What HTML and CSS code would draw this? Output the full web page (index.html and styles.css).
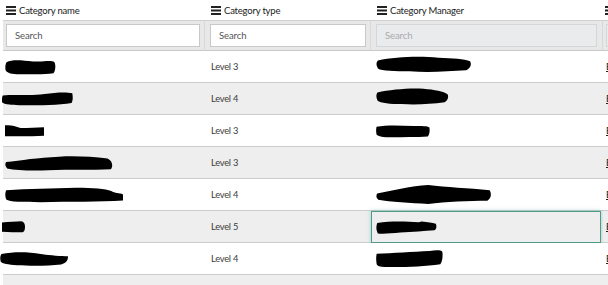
FILE: index.html
```html
<!DOCTYPE html>
<html>
<head>
<meta charset="utf-8">
<link rel="stylesheet" href="styles.css">
</head>
<body>
<div class="grid">
  <div class="hcell c1"><svg class="menu" width="10" height="9" viewBox="0 0 10 9"><rect x="0" y="0" width="10" height="2"/><rect x="0" y="3.5" width="10" height="2"/><rect x="0" y="7" width="10" height="2"/></svg>Category name</div>
  <div class="hcell c2"><svg class="menu" width="10" height="9" viewBox="0 0 10 9"><rect x="0" y="0" width="10" height="2"/><rect x="0" y="3.5" width="10" height="2"/><rect x="0" y="7" width="10" height="2"/></svg>Category type</div>
  <div class="hcell c3"><svg class="menu" width="10" height="9" viewBox="0 0 10 9"><rect x="0" y="0" width="10" height="2"/><rect x="0" y="3.5" width="10" height="2"/><rect x="0" y="7" width="10" height="2"/></svg>Category Manager</div>
  <div class="hcell c4"><svg class="menu" width="10" height="9" viewBox="0 0 10 9"><rect x="0" y="0" width="10" height="2"/><rect x="0" y="3.5" width="10" height="2"/><rect x="0" y="7" width="10" height="2"/></svg>Actions</div>

  <div class="fcell c1"><input class="search" placeholder="Search"></div>
  <div class="fcell c2"><input class="search" placeholder="Search"></div>
  <div class="fcell c3"><input class="search" placeholder="Search" disabled></div>
  <div class="fcell c4"><input class="search" placeholder="Search" disabled></div>

  <!-- row 1 -->
  <div class="cell c1 odd"><svg class="blob" width="51" height="17" viewBox="0 0 100 20" preserveAspectRatio="none"><path d="M3,5 C15,1 35,3 55,4 C75,5 90,2 97,5 C100,9 99,15 95,18 C75,20 50,19 28,19 C14,19 4,18 1,14 C0,10 1,7 3,5 Z"/></svg></div>
  <div class="cell c2 odd">Level 3</div>
  <div class="cell c3 odd"><svg class="blob up" width="96" height="18" viewBox="0 0 100 20" preserveAspectRatio="none"><path d="M2,6 C20,2 45,1 65,3 C80,4 92,4 98,7 C100,11 98,15 94,17 C75,18 55,20 35,18 C20,18 6,18 2,15 C0,11 0,8 2,6 Z"/></svg></div>
  <div class="cell c4 odd"><a href="#">Edit</a></div>

  <!-- row 2 -->
  <div class="cell c1 even"><svg class="blob shiftl" width="71" height="15" viewBox="0 0 100 20" preserveAspectRatio="none"><path d="M1,6 C20,4 40,7 60,4 C75,2 90,1 99,3 C100,8 100,13 98,16 C80,19 55,19 30,19 C15,19 3,18 0,15 C0,11 0,8 1,6 Z"/></svg></div>
  <div class="cell c2 even">Level 4</div>
  <div class="cell c3 even"><svg class="blob up" width="73" height="18" viewBox="0 0 100 20" preserveAspectRatio="none"><path d="M2,6 C20,3 45,1 65,2 C80,3 93,5 98,8 C100,11 98,15 94,17 C75,19 55,20 35,19 C20,19 6,18 2,15 C0,11 0,8 2,6 Z"/></svg></div>
  <div class="cell c4 even"><a href="#">Edit</a></div>

  <!-- row 3 -->
  <div class="cell c1 odd"><svg class="blob" width="39" height="13" viewBox="0 0 100 20" preserveAspectRatio="none"><path d="M0,2 C15,1 25,3 40,6 C60,6 80,6 100,5 L100,18 C80,19 60,19 40,19 C25,19 10,19 0,19 Z"/></svg></div>
  <div class="cell c2 odd">Level 3</div>
  <div class="cell c3 odd"><svg class="blob" width="54" height="14" viewBox="0 0 100 20" preserveAspectRatio="none"><path d="M1,4 C20,1 45,2 70,3 C85,3 95,3 99,5 C100,10 99,15 96,18 C75,19 50,19 28,19 C14,19 4,18 1,15 C0,11 0,7 1,4 Z"/></svg></div>
  <div class="cell c4 odd"><a href="#">Edit</a></div>

  <!-- row 4 -->
  <div class="cell c1 even"><svg class="blob" width="108" height="18" viewBox="0 0 100 20" preserveAspectRatio="none"><path d="M1,9 C15,7 30,4 50,3 C65,2 80,3 95,5 C100,8 100,14 98,17 C80,18 60,17 40,18 C25,19 10,18 2,16 C0,13 0,11 1,9 Z"/></svg></div>
  <div class="cell c2 even">Level 3</div>
  <div class="cell c3 even"></div>
  <div class="cell c4 even"><a href="#">Edit</a></div>

  <!-- row 5 -->
  <div class="cell c1 odd"><svg class="blob" width="118" height="17" viewBox="0 0 100 20" preserveAspectRatio="none"><path d="M1,5 C20,3 40,3 60,2 C75,2 85,3 90,6 C93,9 97,8 100,10 L100,17 C80,19 55,18 30,19 C15,19 4,19 1,16 C0,12 0,8 1,5 Z"/></svg></div>
  <div class="cell c2 odd">Level 4</div>
  <div class="cell c3 odd"><svg class="blob" width="116" height="21" viewBox="0 0 100 20" preserveAspectRatio="none"><path d="M1,9 C15,6 30,2 45,1 C60,3 80,4 98,6 C100,10 99,14 96,16 C80,16 60,17 45,19 C30,18 12,17 2,15 C0,13 0,11 1,9 Z"/></svg></div>
  <div class="cell c4 odd"><a href="#">Edit</a></div>

  <!-- row 6 -->
  <div class="cell c1 even"><svg class="blob shiftl" width="23" height="13" viewBox="0 0 100 20" preserveAspectRatio="none"><path d="M0,4 C30,2 60,3 85,2 C95,3 100,6 100,10 C100,15 97,18 90,19 C60,19 30,19 0,18 Z"/></svg></div>
  <div class="cell c2 even">Level 5</div>
  <div class="cell c3 even"><div class="selected"><svg class="blob" width="61" height="16" viewBox="0 0 100 20" preserveAspectRatio="none"><path d="M2,5 C25,2 50,3 70,4 L75,3 C85,4 92,4 98,6 C100,9 99,13 96,14 C80,15 60,16 40,17 C25,18 10,19 3,18 C0,14 0,9 2,5 Z"/></svg></div></div>
  <div class="cell c4 even"><a href="#">Edit</a></div>

  <!-- row 7 -->
  <div class="cell c1 odd"><svg class="blob shiftl2" width="68" height="15" viewBox="0 0 100 20" preserveAspectRatio="none"><path d="M2,4 C20,1 40,1 60,4 C75,6 90,7 100,7 C100,12 98,16 90,18 C70,20 45,20 25,19 C12,18 3,17 1,14 C0,10 0,7 2,4 Z"/></svg></div>
  <div class="cell c2 odd">Level 4</div>
  <div class="cell c3 odd"><svg class="blob" width="67" height="19" viewBox="0 0 100 20" preserveAspectRatio="none"><path d="M1,5 C25,4 55,3 80,2 C90,1 97,1 99,3 C100,8 99,13 96,16 C75,18 50,19 25,19 C12,19 3,19 1,16 C0,12 0,8 1,5 Z"/></svg></div>
  <div class="cell c4 odd"><a href="#">Edit</a></div>

  <!-- row 8 -->
  <div class="cell c1 even"></div>
  <div class="cell c2 even"></div>
  <div class="cell c3 even"></div>
  <div class="cell c4 even"></div>
</div>
</body>
</html>
```

FILE: styles.css
```css
html, body {
  margin: 0;
  padding: 0;
  background: #fff;
  overflow: hidden;
}
body {
  font-family: Lato, "Open Sans", sans-serif;
  color: #333;
  font-size: 9px;
}
.grid {
  display: grid;
  grid-template-columns: 202px 166px 232px 60px;
  margin-left: 3px;
}
.hcell {
  height: 20px;
  display: flex;
  align-items: center;
  font-size: 9.5px;
  letter-spacing: -0.2px;
  color: #222;
  white-space: nowrap;
  overflow: hidden;
  padding-left: 3px;
}
.hcell.c2, .hcell.c3 { padding-left: 6px; }
.hcell.c4 { padding-left: 2px; }
.menu {
  fill: #222;
  margin-right: 3px;
  flex: none;
}
.fcell {
  height: 29px;
  background: #e8e8e8;
  border-top: 1px solid #d0d0d0;
  border-bottom: 1px solid #c8c8c8;
  border-right: 1px solid #d8d8d8;
  display: flex;
  align-items: center;
  padding: 0 4px 0 3px;
  box-sizing: content-box;
}
.fcell.c2 { padding: 0 4px 0 5px; }
.fcell.c3 { padding: 0 5px 0 5px; }
.search {
  width: 100%;
  box-sizing: border-box;
  height: 23px;
  border: 1px solid #c9c9c9;
  background: #fff;
  font-family: Lato, "Open Sans", sans-serif;
  font-size: 9.5px;
  letter-spacing: -0.1px;
  padding: 0 0 0 8px;
  color: #333;
  outline: none;
  margin: 0;
}
.search::placeholder { color: #555; }
.search:disabled {
  background: #e9ebec;
  border-color: #d4d6d8;
}
.search:disabled::placeholder { color: #a8aaac; }
.cell {
  height: 31px;
  border-bottom: 1px solid #cccccc;
  display: flex;
  align-items: center;
  white-space: nowrap;
  color: #3a3a3a;
  font-size: 9.3px;
  letter-spacing: -0.25px;
  overflow: visible;
}
.cell.odd { background: #fff; }
.cell.even { background: #eeeeee; }
.cell.c1 { padding-left: 2px; }
.cell.c2 { padding-left: 6px; }
.cell.c3 { padding-left: 5px; }
.cell.c4 { padding-left: 3px; overflow: hidden; }
.cell a { color: #222; text-decoration: underline; }
.blob { fill: #000; display: block; flex: none; }
.blob.up { margin-top: -6px; }
.blob.shiftl { margin-left: -3px; }
.blob.shiftl2 { margin-left: -5px; }
.cell.c3:has(.selected) { padding-left: 0; }
.selected {
  box-sizing: border-box;
  width: 230px;
  height: 32px;
  border: 1px solid #4f9a88;
  box-shadow: 0 0 4px rgba(90, 180, 160, 0.55);
  display: flex;
  align-items: center;
  padding-left: 4px;
  align-self: flex-start;
}
```
